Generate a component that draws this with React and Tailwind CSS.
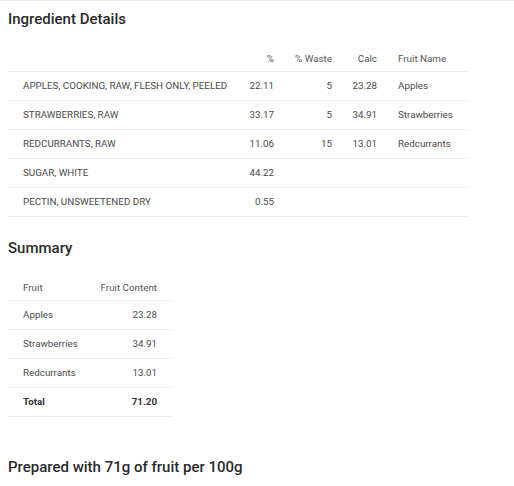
export default function App() {
  const rows = [
    ["APPLES, COOKING, RAW, FLESH ONLY, PEELED", "22.11", "5", "23.28", "Apples"],
    ["STRAWBERRIES, RAW", "33.17", "5", "34.91", "Strawberries"],
    ["REDCURRANTS, RAW", "11.06", "15", "13.01", "Redcurrants"],
    ["SUGAR, WHITE", "44.22", "", "", ""],
    ["PECTIN, UNSWEETENED DRY", "0.55", "", "", ""],
  ];
  const summary = [
    ["Apples", "23.28"],
    ["Strawberries", "34.91"],
    ["Redcurrants", "13.01"],
  ];
  return (
    <div className="w-[514px] h-[486px] bg-white border-t border-[#e8e8e8] text-[#4a4a4a] overflow-hidden" style={{ fontFamily: "Roboto, 'Liberation Sans', sans-serif" }}>
      <h2 className="pl-[8px] pt-[8px] text-[15px] leading-[20px] text-[#2a2a2a] font-medium">Ingredient Details</h2>
      <table className="ml-[8px] mt-[19px] w-[460px] border-collapse table-fixed text-[9.8px]">
        <colgroup>
          <col className="w-[240px]" />
          <col className="w-[32px]" />
          <col className="w-[58px]" />
          <col className="w-[45px]" />
          <col className="w-[85px]" />
        </colgroup>
        <thead>
          <tr className="h-[23px] border-b border-[#ececec] text-[#555]">
            <th className="font-normal"></th>
            <th className="font-normal text-right pr-[6px]">%</th>
            <th className="font-normal text-right pr-[6px]">% Waste</th>
            <th className="font-normal text-right pr-[6px]">Calc</th>
            <th className="font-normal text-left pl-[15px]">Fruit Name</th>
          </tr>
        </thead>
        <tbody>
          {rows.map((r, i) => (
            <tr key={i} className="h-[29px] border-b border-[#ececec]">
              <td className="pl-[15px] pt-[1px]">{r[0]}</td>
              <td className="text-right pr-[6px] pt-[1px]">{r[1]}</td>
              <td className="text-right pr-[6px] pt-[1px]">{r[2]}</td>
              <td className="text-right pr-[6px] pt-[1px]">{r[3]}</td>
              <td className="pl-[15px] pt-[1px]">{r[4]}</td>
            </tr>
          ))}
        </tbody>
      </table>
      <h2 className="pl-[8px] mt-[21px] text-[15px] leading-[20px] text-[#2a2a2a] font-medium">Summary</h2>
      <table className="ml-[8px] mt-[19px] w-[164px] border-collapse table-fixed text-[9.8px]">
        <thead>
          <tr className="h-[24px] border-b border-[#ececec] text-[#555]">
            <th className="font-normal text-left pl-[15px]">Fruit</th>
            <th className="font-normal text-right pr-[15px]">Fruit Content</th>
          </tr>
        </thead>
        <tbody>
          {summary.map((r, i) => (
            <tr key={i} className="h-[29px] border-b border-[#ececec]">
              <td className="pl-[15px]">{r[0]}</td>
              <td className="text-right pr-[15px]">{r[1]}</td>
            </tr>
          ))}
          <tr className="h-[29px] border-b border-[#ececec] font-bold text-[#333]">
            <td className="pl-[15px]">Total</td>
            <td className="text-right pr-[15px]">71.20</td>
          </tr>
        </tbody>
      </table>
      <h2 className="pl-[8px] mt-[40px] text-[15px] leading-[20px] text-[#2a2a2a] font-medium">Prepared with 71g of fruit per 100g</h2>
    </div>
  );
}
